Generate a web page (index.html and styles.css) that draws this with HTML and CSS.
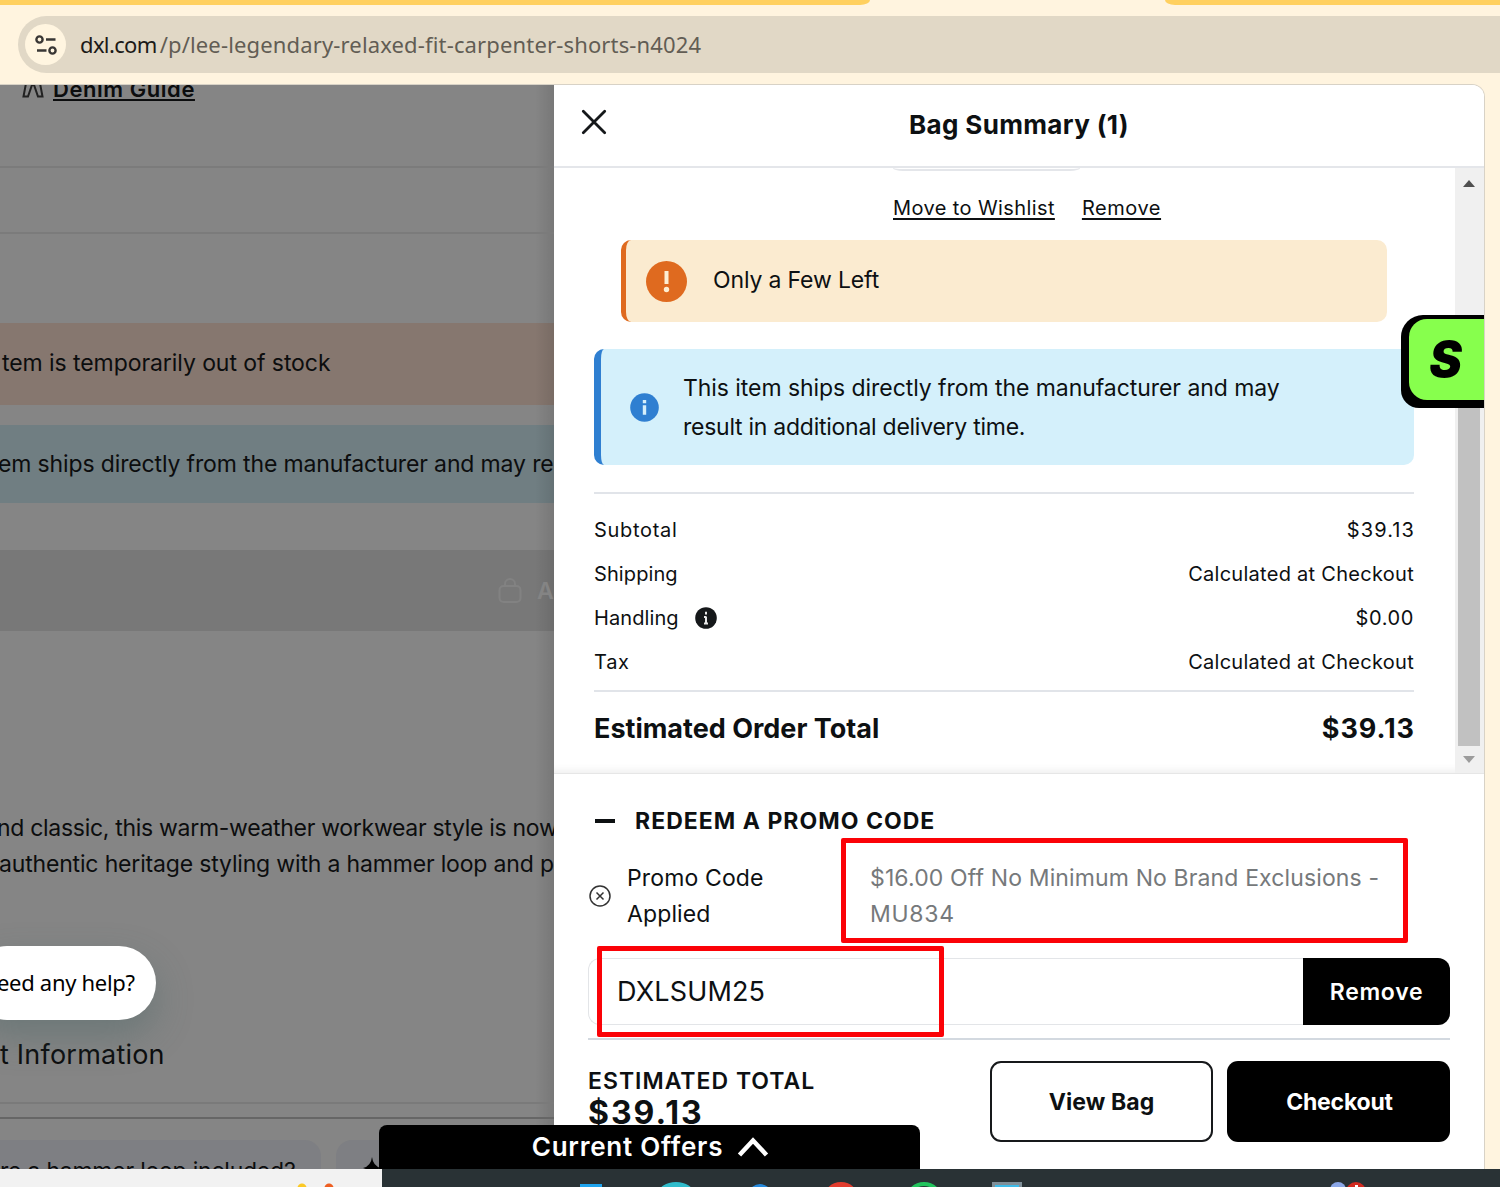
FILE: index.html
```html
<!DOCTYPE html>
<html lang="en">
<head>
<meta charset="utf-8">
<title>Bag Summary</title>
<link rel="stylesheet" href="styles.css">
</head>
<body>
<div class="tabs"><div class="tab tab-left"></div><div class="tab tab-right"></div></div>
<div class="toolbar">
  <div class="omnibox">
    <div class="site-info">
      <svg width="24" height="24" viewBox="0 0 24 24" fill="none" stroke="#393735" stroke-width="2.4"><circle cx="5.5" cy="6.5" r="3.1"/><path d="M12 6.500h9.500M3 17.500h9.500"/><circle cx="18.500" cy="17.500" r="3.100"/></svg>
    </div>
    <div class="url"><span class="host">dxl.com</span><span class="path">/p/lee-legendary-relaxed-fit-carpenter-shorts-n4024</span></div>
  </div>
</div>

<main class="page">
  <section class="product">
    <div class="guide">
      <svg width="24" height="24" viewBox="0 0 24 24" fill="none" stroke="#222" stroke-width="2"><path d="M6 2L2.500 20.500h4.500L12 6l5 14.500h4.500L18 2"/></svg>
      <a class="guide-link">Denim Guide</a>
    </div>
    <div class="spacer-row"></div>
    <div class="notice notice-red"><span class="t-stock">tem is temporarily out of stock</span></div>
    <div class="notice notice-blue"><span class="t-ships">em ships directly from the manufacturer and may re</span></div>
    <div class="add-button">
      <svg width="24" height="26" viewBox="0 0 24 26" fill="none" stroke="#828282" stroke-width="2"><rect x="1.500" y="8" width="21" height="16" rx="4"/><path d="M7 8V6a5 5 0 0 1 10 0v2"/></svg>
      <span>A</span>
    </div>
    <p class="desc"><span class="d1">nd classic, this warm-weather workwear style is now</span><span class="d2">authentic heritage styling with a hammer loop and p</span></p>
    <h2 class="info-title">t Information</h2>
    <div class="rule-a"></div>
    <div class="chips">
      <div class="chip chip-a"><span>re a hammer loop included?</span></div>
      <div class="chip chip-b"><svg width="18" height="22" viewBox="0 0 18 22"><path d="M9 0Q10 9 18 11Q10 13 9 22Q8 13 0 11Q8 9 9 0Z"/></svg></div>
    </div>
    <div class="help">eed any help?</div>
  </section>

  <aside class="drawer">
    <header class="drawer-head">
      <svg class="close" width="28" height="28" viewBox="0 0 28 28" fill="none" stroke="#15181a" stroke-width="2.800" stroke-linecap="round"><path d="M3.300 3.300L24.700 24.700M24.700 3.300L3.300 24.700"/></svg>
      <h1>Bag Summary (1)</h1>
    </header>
    <div class="drawer-body">
      <div class="bag">
        <div class="qty"></div>
        <div class="links"><a class="l-move">Move to Wishlist</a><a class="l-remove">Remove</a></div>
        <div class="alert alert-warn">
          <svg width="41" height="41" viewBox="0 0 41 41"><circle cx="20.500" cy="20.500" r="20.500" fill="#df6a1f"/><path d="M20.500 10v13" stroke="#fdeed3" stroke-width="4"/><circle cx="20.500" cy="28.500" r="2.700" fill="#fdeed3"/></svg>
          <span class="t-few">Only a Few Left</span>
        </div>
        <div class="alert alert-info">
          <svg width="29" height="29" viewBox="0 0 29 29"><circle cx="14.500" cy="14.500" r="14.300" fill="#2f7fd1"/><path d="M14.500 12.200v9.500M14.500 7v3.200" stroke="#d5effb" stroke-width="3.400"/></svg>
          <p><span class="i1">This item ships directly from the manufacturer and may</span><span class="i2">result in additional delivery time.</span></p>
        </div>
        <dl class="totals">
          <div><dt class="wide">Subtotal</dt><dd class="price">$39.13</dd></div>
          <div><dt>Shipping</dt><dd>Calculated at Checkout</dd></div>
          <div><dt>Handling <svg width="22" height="22" viewBox="0 0 22 22"><circle cx="11" cy="11" r="10.800" fill="#15181a"/><path d="M11 9.500v7.500M11 4.700v2.800M9 10h2M9 16.500h4" stroke="#e8e8e8" stroke-width="2"/></svg></dt><dd class="zero">$0.00</dd></div>
          <div><dt class="wide">Tax</dt><dd>Calculated at Checkout</dd></div>
        </dl>
        <div class="order-total"><span>Estimated Order Total</span><span class="amount">$39.13</span></div>
      </div>
      <div class="scrollbar">
        <svg width="12" height="7" viewBox="0 0 12 7"><path d="M6 0l6 7H0z" fill="#505050"/></svg>
        <div class="thumb"></div>
        <svg width="12" height="7" viewBox="0 0 12 7"><path d="M6 7l6-7H0z" fill="#9c9c9c"/></svg>
      </div>
    </div>
    <footer class="drawer-foot">
      <div class="promo-head"><i class="minus"></i><span>REDEEM A PROMO CODE</span></div>
      <div class="promo-row">
        <svg width="22" height="22" viewBox="0 0 22 22" fill="none" stroke="#333" stroke-width="1.500"><circle cx="11" cy="11" r="10"/><path d="M7.500 7.500l7 7M14.500 7.500l-7 7"/></svg>
        <p class="applied"><span>Promo Code</span><span>Applied</span></p>
        <p class="deal"><span>$16.00 Off No Minimum No Brand Exclusions -</span><span class="deal-code">MU834</span></p>
      </div>
      <div class="promo-input"><span class="code">DXLSUM25</span><button class="remove">Remove</button></div>
      <div class="actions">
        <div class="estimate"><span class="e-label">ESTIMATED TOTAL</span><span class="e-value">$39.13</span></div>
        <button class="btn btn-light">View Bag</button>
        <button class="btn btn-dark">Checkout</button>
      </div>
    </footer>
  </aside>
  <div class="coupon-tab"><div class="coupon-face">S</div></div>
  <div class="mark mark-deal"></div>
  <div class="mark mark-code"></div>
  <div class="offers"><span>Current Offers</span><svg width="32" height="22" viewBox="0 0 32 22" fill="none" stroke="#fff" stroke-width="4.500"><path d="M2.500 20L16 5.500L29.500 20"/></svg></div>
</main>

<div class="taskbar">
  <div class="search"></div>
  <svg width="1118" height="18" viewBox="382 0 1118 18">
    <path d="M580 15h22v3h-22z" fill="#1fa4ee"/>
    <ellipse cx="676" cy="25" rx="18" ry="12" fill="#30bccb"/>
    <path d="M752 18q8-6 16 0z" fill="#2589dc"/>
    <circle cx="841" cy="31" r="18" fill="#e23c2e"/>
    <circle cx="924" cy="32" r="17" fill="none" stroke="#22c45d" stroke-width="4"/>
    <path d="M992 13h30v5h-30z" fill="#7f8f98"/><path d="M995 16h24v2h-24z" fill="#3dbbe8"/>
    <circle cx="1338" cy="21" r="8" fill="#8ba7e8"/><circle cx="1356" cy="23" r="10" fill="#d32a20"/><path d="M1355 16h3v2h-3z" fill="#fff"/>
  </svg>
</div>
</body>
</html>
```
FILE: styles.css
```css
* { box-sizing: border-box; }
body {
  margin: 0; width: 1500px; height: 1187px; overflow: hidden;
  display: flex; flex-direction: column;
  background: #fff4df; color: #0d1012;
  font-family: Inter, "Liberation Sans", sans-serif;
}
h1, h2, p, dl, dd { margin: 0; }
button { border: 0; font-family: inherit; padding: 0; }
svg { flex: none; display: block; }

.tabs { display: flex; justify-content: space-between; height: 5px; }
.tab { background: #ffd05f; }
.tab-left { width: 870px; border-bottom-right-radius: 10px 5px; }
.tab-right { width: 335px; border-bottom-left-radius: 10px 5px; }

.toolbar { height: 79px; padding: 11px 0 0 18px; }
.omnibox {
  height: 57px; display: flex; align-items: center; gap: 14px; padding-left: 7px;
  background: #e1d8c6; border-radius: 29px 0 0 29px;
}
.site-info {
  width: 41px; height: 41px; border-radius: 50%; background: #fff5e0;
  display: flex; align-items: center; justify-content: center;
}
.url { padding-bottom: 2px; font-family: "Noto Sans", sans-serif; font-size: 22px; letter-spacing: .15px; color: #625d54; white-space: nowrap; }
.host { color: #1c1a18; letter-spacing: -.65px; margin-right: 3px; }

.page {
  position: relative; width: 1485px; height: 1085px; overflow: hidden;
  display: grid; grid-template-columns: 554px 1fr;
  background: #fff; border: 1px solid #d8d2c6; border-width: 1px 1px 0 0;
  border-top-right-radius: 13px;
}

.product {
  position: relative; overflow: hidden; white-space: nowrap; color: #0c0d0e;
  background: linear-gradient(to right, transparent 535px, rgba(0,0,0,.1)) , #858585;
  font-size: 23px;
}
.guide { height: 83px; display: flex; gap: 8px; padding-left: 21px; border-bottom: 2px solid #7b7b7b; }
.guide svg { margin-top: -9px; }
.guide-link { margin-top: -10px; height: 28px; line-height: 28px; font-size: 22px; font-weight: 600; letter-spacing: .55px; text-decoration: underline; text-decoration-thickness: 2px; text-underline-offset: 2px; }
.spacer-row { height: 66px; border-bottom: 2px solid #7b7b7b; }
.notice { display: flex; align-items: center; }
.notice-red { margin-top: 89px; height: 82px; padding-left: 2px; padding-bottom: 3px; letter-spacing: -.07px; background: linear-gradient(to right, transparent 535px, rgba(0,0,0,.1)), #86776f; }
.notice-blue { margin-top: 20px; height: 78px; letter-spacing: -.14px; background: linear-gradient(to right, transparent 535px, rgba(0,0,0,.1)), #707e82; }
.t-ships { margin-left: -2px; }
.add-button {
  margin-top: 47px; height: 81px; padding-left: 498px; display: flex; align-items: center; gap: 15px;
  background: linear-gradient(to right, transparent 535px, rgba(0,0,0,.1)), #787878;
  color: #848484; font-weight: 600;
}
.desc { margin-top: 179px; line-height: 36px; display: flex; flex-direction: column; }
.d1 { margin-left: -3px; letter-spacing: -.3px; }
.d2 { margin-left: -1px; letter-spacing: -.17px; }
.info-title { margin-top: 155px; font-size: 27px; line-height: 36px; font-weight: 400; letter-spacing: .22px; }
.rule-a { margin-top: 29px; height: 17px; border: solid #7a7a7a; border-width: 2px 0; border-bottom-color: #666; }
.chips { margin-top: 21px; display: flex; gap: 15px; color: #0c0d0e; }
.chip { flex: none; height: 60px; padding-top: 17px; line-height: 28px; letter-spacing: -.23px; background: #7e7f83; border-radius: 16px; }
.chip-a { width: 321px; border-top-left-radius: 0; }
.chip-b { width: 300px; padding: 17px 0 0 27px; }
.help {
  position: absolute; left: -30px; top: 861px; width: 186px; height: 74px; padding-left: 27px;
  background: #fff; border-radius: 37px; color: #000; font: 22px/73px "Noto Sans", sans-serif; letter-spacing: -.3px;
  box-shadow: 0 16px 36px rgba(70,100,100,.4);
}

.drawer { display: flex; flex-direction: column; background: #fff; }
.drawer-head { height: 83px; padding-bottom: 2px; position: relative; display: flex; align-items: center; justify-content: center; border-bottom: 2px solid #e4e6ea; }
.close { position: absolute; left: 26px; top: 23px; }
.drawer-head h1 { font-size: 26px; font-weight: 700; line-height: 32px; letter-spacing: .35px; }
.drawer-body { height: 606px; display: flex; border-bottom: 1px solid #e6e6e6; box-shadow: inset 0 -8px 8px -6px rgba(0,0,0,.08); }
.bag { flex: 1; padding: 0 41px 0 40px; }
.qty { width: 187px; height: 3px; margin-left: 299px; border: solid #e4e6ea; border-width: 0 1px 2px; border-radius: 0 0 10px 10px / 0 0 3px 3px; }
.links { display: flex; gap: 27px; margin: 22px 0 0 299px; height: 30px; line-height: 30px; font-size: 20px; letter-spacing: .4px; }
.links a { text-decoration: underline; text-decoration-thickness: 2px; text-underline-offset: 3px; }
.l-remove { letter-spacing: .55px; }
.alert { display: flex; align-items: center; border-radius: 10px; font-size: 23px; }
.alert-warn { height: 82px; margin: 17px 27px 0; padding-left: 20px; gap: 26px; background: #fbebd0; border-left: 5px solid #df6a1f; }
.t-few { padding-bottom: 2px; letter-spacing: -.15px; }
.alert-info { height: 116px; margin-top: 27px; padding-left: 29px; gap: 24px; background: #d4f0fb; border-left: 7px solid #2f7fd1; }
.alert-info p { padding-top: 2px; display: flex; flex-direction: column; line-height: 39px; white-space: nowrap; }
.i1 { letter-spacing: -.06px; }
.i2 { letter-spacing: -.26px; }
.totals { margin-top: 27px; padding: 14px 0 6px; border: solid #e1e4e9; border-width: 2px 0; font-size: 20px; letter-spacing: .28px; }
.totals div { height: 44px; display: flex; justify-content: space-between; align-items: center; }
.totals dt { display: flex; align-items: center; gap: 16px; letter-spacing: .1px; }
.totals .wide { letter-spacing: .7px; }
.totals .price { letter-spacing: 1.1px; margin-right: -1px; }
.totals .zero { letter-spacing: .6px; }
.order-total { height: 72px; display: flex; justify-content: space-between; align-items: center; font-size: 27px; font-weight: 700; }
.amount { letter-spacing: .95px; margin-right: -1px; }
.scrollbar { width: 29px; padding: 12px 1px 10px 0; background: #f0f0f0; display: flex; flex-direction: column; align-items: center; }
.thumb { flex: 1; width: 22px; margin: 160px 0 10px; background: #c1c1c1; }

.drawer-foot { flex: 1; padding: 0 34px 0 34px; }
.promo-head { margin-top: 30px; height: 34px; padding-left: 7px; display: flex; align-items: center; gap: 20px; font-size: 23px; font-weight: 700; letter-spacing: 1.03px; white-space: nowrap; }
.minus { width: 20px; height: 4px; background: #0d1012; }
.promo-row { margin-top: 22px; height: 72px; padding-left: 1px; display: flex; align-items: center; font-size: 23px; line-height: 36px; letter-spacing: .13px; white-space: nowrap; }
.promo-row p { display: flex; flex-direction: column; }
.applied { width: 243px; margin-left: 16px; }
.deal { color: #76797b; }
.deal-code { letter-spacing: .7px; }
.promo-input { margin-top: 26px; height: 67px; display: flex; justify-content: space-between; align-items: center; border: 1px solid #e3e5e8; border-right: 0; border-radius: 12px; padding-left: 28px; }
.code { font-size: 27px; letter-spacing: .15px; }
.remove { width: 147px; height: 67px; background: #000; color: #fff; font-size: 23px; font-weight: 600; letter-spacing: .7px; border-radius: 0 12px 12px 0; }
.actions { margin-top: 13px; border-top: 2px solid #d3d9e0; padding-top: 21px; display: flex; gap: 14px; }
.estimate { flex: 1; display: flex; flex-direction: column; white-space: nowrap; }
.e-label { font-size: 23px; font-weight: 600; line-height: 30px; margin-top: 5px; letter-spacing: 1px; }
.e-value { font-size: 32px; font-weight: 700; line-height: 32px; letter-spacing: 2px; margin-top: 1px; }
.btn { width: 223px; height: 81px; border-radius: 11px; font-size: 23px; font-weight: 700; letter-spacing: .1px; }
.btn-light { background: #fff; border: 2px solid #17191b; color: #0d1012; }
.btn-dark { background: #000; color: #fff; letter-spacing: -.2px; padding-left: 2px; }

.coupon-tab { position: absolute; left: 1401px; top: 230px; width: 84px; height: 93px; padding: 4px 0 8px 8px; background: #000; border-radius: 22px 0 0 18px; }
.coupon-face { height: 81px; background: #87ff4d; border-radius: 18px 0 0 18px; padding-right: 3px; text-align: center; font-size: 49px; line-height: 81px; font-weight: 900; font-style: italic; color: #000; }
.mark { position: absolute; border: 5px solid #fb0207; border-radius: 2px; }
.mark-deal { left: 841px; top: 753px; width: 567px; height: 105px; }
.mark-code { left: 597px; top: 861px; width: 347px; height: 91px; }
.offers {
  position: absolute; left: 379px; top: 1040px; width: 541px; height: 45px; padding: 0 0 3px 2px;
  display: flex; align-items: center; justify-content: center; gap: 14px;
  background: #000; color: #fff; border-radius: 8px 8px 0 0; font-size: 26px; font-weight: 600; letter-spacing: .75px;
}

.taskbar { height: 18px; display: flex; background: #293235; }
.search { width: 382px; background: radial-gradient(circle at 302px 19px, #fbc926 4px, transparent 5px), radial-gradient(circle at 329px 19px, #ee5f22 4px, transparent 5px), #f2f2f2; }
```
